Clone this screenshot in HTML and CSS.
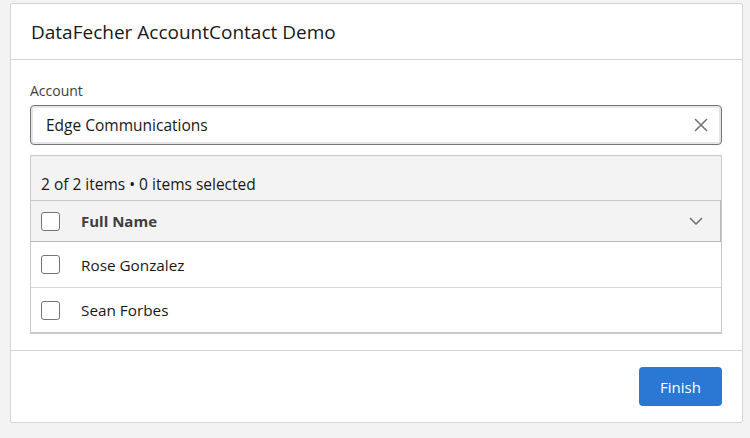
FILE: index.html
```html
<!DOCTYPE html>
<html lang="en">
<head>
    <meta charset="UTF-8">
    <title>DataFecher AccountContact Demo</title>
    <link rel="stylesheet" href="styles.css">
</head>
<body>
    <div class="card">
        <header class="card-header">
            <h1>DataFecher AccountContact Demo</h1>
        </header>

        <main class="card-body">
            <label class="field-label" for="account">Account</label>
            <div class="lookup">
                <input id="account" class="lookup-input" type="text" value="Edge Communications">
                <button class="clear-btn" title="Clear">
                    <svg width="14" height="14" viewBox="0 0 14 14"><path d="M1 1L13 13M13 1L1 13" stroke="#747474" stroke-width="1.6" fill="none"/></svg>
                </button>
            </div>

            <div class="table-wrap">
                <div class="table-summary">2 of 2 items &bull; 0 items selected</div>
                <div class="row head-row">
                    <span class="check"></span>
                    <span class="cell-name">Full Name</span>
                    <svg class="chevron" width="14" height="8" viewBox="0 0 14 8"><path d="M1 1L7 7L13 1" stroke="#706e6b" stroke-width="1.5" fill="none"/></svg>
                </div>
                <div class="row">
                    <span class="check"></span>
                    <span class="cell-name">Rose Gonzalez</span>
                </div>
                <div class="row">
                    <span class="check"></span>
                    <span class="cell-name">Sean Forbes</span>
                </div>
            </div>
        </main>

        <footer class="card-footer">
            <button class="finish-btn">Finish</button>
        </footer>
    </div>
</body>
</html>
```

FILE: styles.css
```css
* {
    box-sizing: border-box;
    margin: 0;
    padding: 0;
    font-family: 'Open Sans', 'Noto Sans', sans-serif;
}

body {
    background-color: #f3f3f3;
    color: #181818;
    padding: 3px 0 0 10px;
}

.card {
    width: 733px;
    background: white;
    border: 1px solid #d4d4d4;
    border-radius: 2px;
}

.card-header {
    height: 56px;
    display: flex;
    align-items: center;
    padding-left: 20px;
    border-bottom: 1px solid #d4d4d4;
}

.card-header h1 {
    font-size: 19px;
    font-weight: 400;
}

.card-body {
    padding: 21px 20px 16px 19px;
    border-bottom: 1px solid #d4d4d4;
}

.field-label {
    display: block;
    font-size: 14px;
    color: #3e3e3c;
    line-height: 20px;
    margin-bottom: 4px;
}

.lookup {
    height: 40px;
    border: 1px solid #747474;
    border-radius: 4px;
    box-shadow: inset 0 0 0 2px #e5e5e5;
    display: flex;
    align-items: center;
}

.lookup-input {
    flex: 1;
    border: none;
    outline: none;
    background: transparent;
    font-size: 15.5px;
    color: #181818;
    padding-left: 15px;
}

.clear-btn {
    border: none;
    background: transparent;
    width: 36px;
    height: 36px;
    display: flex;
    align-items: center;
    justify-content: center;
    margin-right: 2px;
}

.table-wrap {
    margin-top: 10px;
    border: 1px solid #c9c9c9;
    border-bottom-width: 2px;
}

.table-summary {
    background: #f3f3f3;
    height: 44px;
    padding: 17px 0 0 10px;
    font-size: 15.5px;
    color: #181818;
}

.row {
    height: 45px;
    display: flex;
    align-items: center;
    padding-left: 10px;
    border-top: 1px solid #d4d4d4;
    font-size: 15.3px;
    color: #181818;
}

.head-row {
    height: 42px;
    background: #f3f3f3;
    border-top: 1px solid #c9c9c9;
    border-bottom: 1px solid #b8b8b8;
    border-right: 1px solid #b8b8b8;
    font-weight: 700;
    font-size: 15px;
    color: #3e3e3c;
}

.head-row + .row {
    border-top: none;
}

.check {
    width: 19px;
    height: 19px;
    border: 1px solid #747474;
    border-radius: 3px;
    background: white;
    margin-right: 21px;
}

.cell-name {
    flex: 1;
}

.chevron {
    margin-right: 17px;
}

.card-footer {
    display: flex;
    justify-content: flex-end;
    padding: 16px 20px 16px;
}

.finish-btn {
    width: 83px;
    height: 39px;
    background: #2b77d4;
    color: white;
    border: none;
    border-radius: 4px;
    font-size: 15px;
}
```
